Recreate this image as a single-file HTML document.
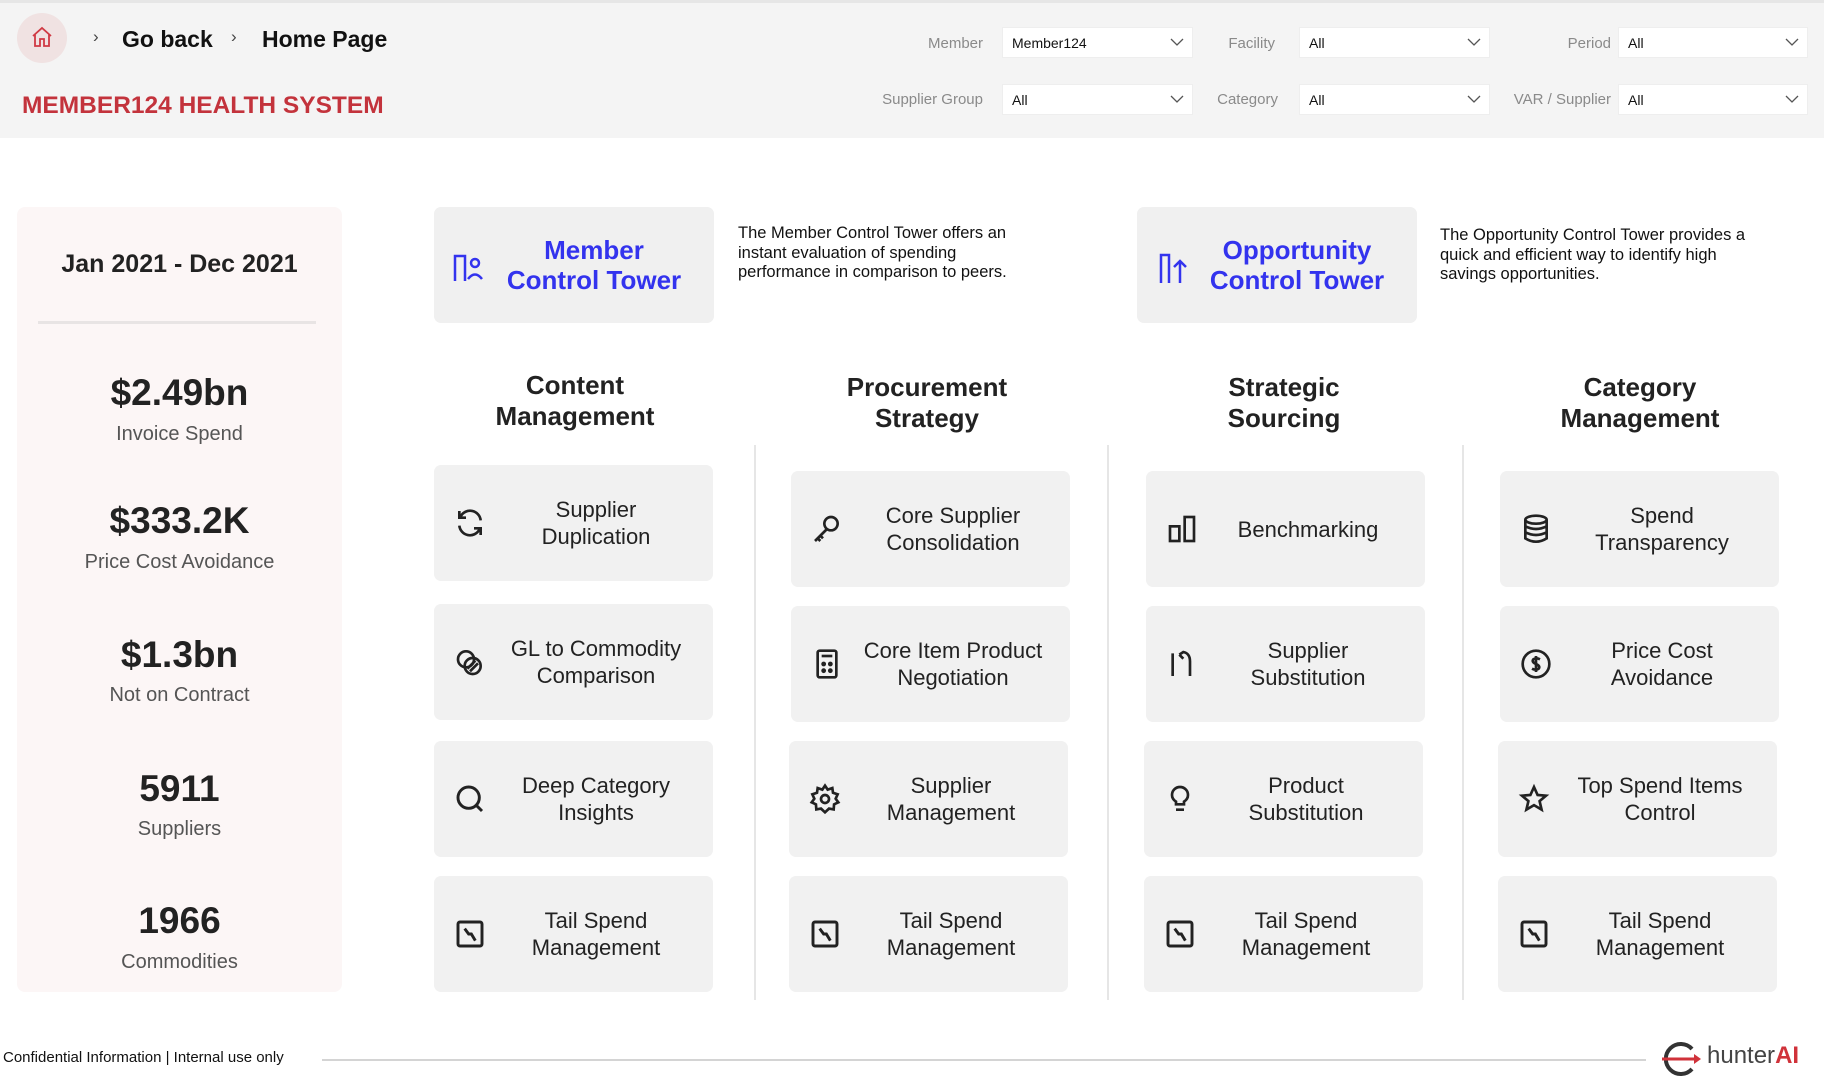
<!DOCTYPE html>
<html><head><meta charset="utf-8"><style>
*{margin:0;padding:0;box-sizing:border-box}
body{width:1824px;height:1082px;background:#fff;font-family:"Liberation Sans",Arial,sans-serif;position:relative;overflow:hidden;color:#222}
.a{position:absolute}
.hdr{left:0;top:0;width:1824px;height:138px;background:#f4f4f4;border-top:3px solid #e6e6e6}
.lbl{font-size:15px;color:#8a8a8a;text-align:right;width:160px}
.sel{background:#fff;border:1px solid #eee;height:31px;font-size:14px;color:#111;padding:7px 9px}
.sel svg{position:absolute;right:8px;top:9px}
.panel{left:17px;top:207px;width:325px;height:785px;background:#fcf6f6;border-radius:8px}
.kv{width:325px;left:17px;text-align:center}
.big{font-size:37px;font-weight:bold;color:#222}
.sm{font-size:20px;color:#555}
.card{background:#f1f1f1;border-radius:7px;width:279px;height:116px;display:flex;align-items:center;justify-content:center;padding-left:50px;padding-right:5px;text-align:center;font-size:22px;line-height:27px;color:#222}
.card svg{position:absolute;left:20px;top:42px}
.ch{font-size:26px;font-weight:bold;text-align:center;line-height:31px;width:300px;color:#222}
.vd{width:2px;background:#e6e6e6;top:445px;height:555px}
.tw{background:#f0f0f0;border-radius:7px;width:280px;height:116px;color:#3333ee;font-weight:bold;font-size:26px;line-height:30px;text-align:center;padding-left:40px;display:flex;align-items:center;justify-content:center}
.desc{font-size:16.5px;line-height:19.5px;color:#111;width:330px}
</style></head><body>
<div class="a hdr"></div>
<div class="a" style="left:17px;top:13px;width:50px;height:50px;border-radius:50%;background:#f0e2e2"></div>
<svg class="a" style="left:30px;top:25px" width="24" height="24" viewBox="0 0 24 24" fill="none" stroke="#d03a44" stroke-width="1.8"><path d="M3 11 L12 3 L21 11 M5 9 V21 H10 V14 H14 V21 H19 V9"/></svg>
<div class="a" style="left:93px;top:27px;font-size:17px;color:#444">›</div>
<div class="a" style="left:122px;top:26px;font-size:23px;font-weight:bold;color:#111">Go back</div>
<div class="a" style="left:231px;top:27px;font-size:17px;color:#444">›</div>
<div class="a" style="left:262px;top:26px;font-size:23px;font-weight:bold;color:#111">Home Page</div>
<div class="a" style="left:22px;top:92px;font-size:24.5px;font-weight:bold;color:#c3333c">MEMBER124 HEALTH SYSTEM</div>

<div class="a lbl" style="left:823px;top:35px">Member</div>
<div class="a sel" style="left:1002px;top:27px;width:191px">Member124<svg width="14" height="10" viewBox="0 0 14 10"><path d="M1 2 L7 8 L13 2" fill="none" stroke="#555" stroke-width="1.3"/></svg></div>
<div class="a lbl" style="left:1115px;top:35px">Facility</div>
<div class="a sel" style="left:1299px;top:27px;width:191px">All<svg width="14" height="10" viewBox="0 0 14 10"><path d="M1 2 L7 8 L13 2" fill="none" stroke="#555" stroke-width="1.3"/></svg></div>
<div class="a lbl" style="left:1451px;top:35px">Period</div>
<div class="a sel" style="left:1618px;top:27px;width:190px">All<svg width="14" height="10" viewBox="0 0 14 10"><path d="M1 2 L7 8 L13 2" fill="none" stroke="#555" stroke-width="1.3"/></svg></div>
<div class="a lbl" style="left:823px;top:91px">Supplier Group</div>
<div class="a sel" style="left:1002px;top:84px;width:191px">All<svg width="14" height="10" viewBox="0 0 14 10"><path d="M1 2 L7 8 L13 2" fill="none" stroke="#555" stroke-width="1.3"/></svg></div>
<div class="a lbl" style="left:1118px;top:91px">Category</div>
<div class="a sel" style="left:1299px;top:84px;width:191px">All<svg width="14" height="10" viewBox="0 0 14 10"><path d="M1 2 L7 8 L13 2" fill="none" stroke="#555" stroke-width="1.3"/></svg></div>
<div class="a lbl" style="left:1451px;top:91px">VAR / Supplier</div>
<div class="a sel" style="left:1618px;top:84px;width:190px">All<svg width="14" height="10" viewBox="0 0 14 10"><path d="M1 2 L7 8 L13 2" fill="none" stroke="#555" stroke-width="1.3"/></svg></div>

<div class="a panel"></div>
<div class="a kv" style="top:250px;font-size:25px;font-weight:bold;color:#222">Jan 2021 - Dec 2021</div>
<div class="a" style="left:38px;top:321px;width:278px;height:3px;background:#e8e4e4"></div>
<div class="a kv big" style="top:372px">$2.49bn</div><div class="a kv sm" style="top:423px">Invoice Spend</div>
<div class="a kv big" style="top:500px">$333.2K</div><div class="a kv sm" style="top:551px">Price Cost Avoidance</div>
<div class="a kv big" style="top:634px">$1.3bn</div><div class="a kv sm" style="top:684px">Not on Contract</div>
<div class="a kv big" style="top:768px">5911</div><div class="a kv sm" style="top:818px">Suppliers</div>
<div class="a kv big" style="top:900px">1966</div><div class="a kv sm" style="top:951px">Commodities</div>

<div class="a tw" style="left:434px;top:207px"><div>Member<br>Control Tower</div></div>
<svg class="a" style="left:453px;top:253px" width="34" height="30" viewBox="0 0 34 30" fill="none" stroke="#3333ee" stroke-width="2.5"><path d="M2 28 V3 H12 V28"/><circle cx="22" cy="10" r="4"/><path d="M15 26 Q22 17 29 26"/></svg>
<div class="a desc" style="left:738px;top:224px;width:300px">The Member Control Tower offers an instant evaluation of spending performance in comparison to peers.</div>
<div class="a tw" style="left:1137px;top:207px"><div>Opportunity<br>Control Tower</div></div>
<svg class="a" style="left:1158px;top:251px" width="34" height="34" viewBox="0 0 34 34" fill="none" stroke="#3333ee" stroke-width="2.5"><path d="M3 32 V4 H11 V32"/><path d="M22 32 V10 M16 16 L22 10 L28 16"/></svg>
<div class="a desc" style="left:1440px;top:226px">The Opportunity Control Tower provides a quick and efficient way to identify high savings opportunities.</div>

<div class="a ch" style="left:425px;top:370px">Content<br>Management</div>
<div class="a ch" style="left:777px;top:372px">Procurement<br>Strategy</div>
<div class="a ch" style="left:1134px;top:372px">Strategic<br>Sourcing</div>
<div class="a ch" style="left:1490px;top:372px">Category<br>Management</div>
<div class="a vd" style="left:754px"></div>
<div class="a vd" style="left:1107px"></div>
<div class="a vd" style="left:1462px"></div>

<div class="a card" style="left:434px;top:465px"><svg width="32" height="32" viewBox="0 0 24 24" fill="none" stroke="#222" stroke-width="2"><path d="M20 10 A8 8 0 0 0 5 7 M4 3 V8 H9 M4 14 A8 8 0 0 0 19 17 M20 21 V16 H15"/></svg>Supplier<br>Duplication</div>
<div class="a card" style="left:434px;top:604px"><svg width="32" height="32" viewBox="0 0 24 24" fill="none" stroke="#222" stroke-width="2"><circle cx="9" cy="10" r="6"/><circle cx="14" cy="15" r="6"/><path d="M10 17 L16 11 M12 19 L18 13"/></svg>GL to Commodity<br>Comparison</div>
<div class="a card" style="left:434px;top:741px"><svg width="32" height="32" viewBox="0 0 24 24" fill="none" stroke="#222" stroke-width="2.2"><circle cx="11" cy="11" r="8"/><path d="M17 17 L21 21"/></svg>Deep Category<br>Insights</div>
<div class="a card" style="left:434px;top:876px"><svg width="32" height="32" viewBox="0 0 24 24" fill="none" stroke="#222" stroke-width="2.2"><rect x="3" y="3" width="18" height="18" rx="1.5"/><path d="M8 8 L11 12 L13 12 L16 17"/></svg>Tail Spend<br>Management</div>
<div class="a card" style="left:791px;top:471px"><svg width="32" height="32" viewBox="0 0 24 24" fill="none" stroke="#222" stroke-width="2"><circle cx="15" cy="8" r="5"/><path d="M12 12 L3 21 M5 19 L7 21 M7 17 L9 19"/></svg>Core Supplier<br>Consolidation</div>
<div class="a card" style="left:791px;top:606px"><svg width="32" height="32" viewBox="0 0 24 24" fill="none" stroke="#222" stroke-width="2"><rect x="5" y="2" width="14" height="20" rx="1.5"/><path d="M8 6 H16"/><circle cx="9.5" cy="12" r=".8" fill="#222"/><circle cx="14.5" cy="12" r=".8" fill="#222"/><circle cx="9.5" cy="17" r=".8" fill="#222"/><circle cx="14.5" cy="17" r=".8" fill="#222"/></svg>Core Item Product<br>Negotiation</div>
<div class="a card" style="left:789px;top:741px"><svg width="32" height="32" viewBox="0 0 24 24" fill="none" stroke="#222" stroke-width="2"><circle cx="12" cy="12" r="3"/><path d="M12 2 L14 5 L17.5 3.8 L18 7.3 L21.5 8.5 L20 11.8 L22 14.5 L18.8 16 L18.5 19.8 L15 19.2 L12 22 L9 19.2 L5.5 19.8 L5.2 16 L2 14.5 L4 11.8 L2.5 8.5 L6 7.3 L6.5 3.8 L10 5 Z"/></svg>Supplier<br>Management</div>
<div class="a card" style="left:789px;top:876px"><svg width="32" height="32" viewBox="0 0 24 24" fill="none" stroke="#222" stroke-width="2.2"><rect x="3" y="3" width="18" height="18" rx="1.5"/><path d="M8 8 L11 12 L13 12 L16 17"/></svg>Tail Spend<br>Management</div>
<div class="a card" style="left:1146px;top:471px"><svg width="32" height="32" viewBox="0 0 24 24" fill="none" stroke="#222" stroke-width="2"><rect x="3" y="10" width="7" height="11"/><rect x="14" y="3" width="7" height="18"/></svg>Benchmarking</div>
<div class="a card" style="left:1146px;top:606px"><svg width="32" height="32" viewBox="0 0 24 24" fill="none" stroke="#222" stroke-width="2"><path d="M5 4 V21 M10 5 L13 3 Q18 4 18 10 V21 M10 5 L13 8"/></svg>Supplier<br>Substitution</div>
<div class="a card" style="left:1144px;top:741px"><svg width="32" height="32" viewBox="0 0 24 24" fill="none" stroke="#222" stroke-width="2"><path d="M9 16 V14 Q6 12 6 9 A6 6 0 0 1 18 9 Q18 12 15 14 V16 Z M9 20 H15"/></svg>Product<br>Substitution</div>
<div class="a card" style="left:1144px;top:876px"><svg width="32" height="32" viewBox="0 0 24 24" fill="none" stroke="#222" stroke-width="2.2"><rect x="3" y="3" width="18" height="18" rx="1.5"/><path d="M8 8 L11 12 L13 12 L16 17"/></svg>Tail Spend<br>Management</div>
<div class="a card" style="left:1500px;top:471px"><svg width="32" height="32" viewBox="0 0 24 24" fill="none" stroke="#222" stroke-width="2"><ellipse cx="12" cy="5" rx="8" ry="3"/><path d="M4 5 V19 Q12 24 20 19 V5 M4 10 Q12 14 20 10 M4 14.5 Q12 18.5 20 14.5"/></svg>Spend<br>Transparency</div>
<div class="a card" style="left:1500px;top:606px"><svg width="32" height="32" viewBox="0 0 24 24" fill="none" stroke="#222" stroke-width="2"><circle cx="12" cy="12" r="10"/><path d="M15 8.5 Q12 7 10 8.5 Q8.5 10.5 12 12 Q15.5 13.5 14 15.5 Q12 17 9 15.5 M12 6 V18"/></svg>Price Cost<br>Avoidance</div>
<div class="a card" style="left:1498px;top:741px"><svg width="32" height="32" viewBox="0 0 24 24" fill="none" stroke="#222" stroke-width="2"><path d="M12 3 L14.7 9 L21 9.5 L16.2 13.6 L17.7 20 L12 16.6 L6.3 20 L7.8 13.6 L3 9.5 L9.3 9 Z"/></svg>Top Spend Items<br>Control</div>
<div class="a card" style="left:1498px;top:876px"><svg width="32" height="32" viewBox="0 0 24 24" fill="none" stroke="#222" stroke-width="2.2"><rect x="3" y="3" width="18" height="18" rx="1.5"/><path d="M8 8 L11 12 L13 12 L16 17"/></svg>Tail Spend<br>Management</div>

<div class="a" style="left:3px;top:1049px;font-size:15px;color:#111">Confidential Information | Internal use only</div>
<div class="a" style="left:322px;top:1059px;width:1324px;height:2px;background:#d4d4d4"></div>
<svg class="a" style="left:1658px;top:1039px" width="46" height="40" viewBox="0 0 46 40" fill="none"><path d="M34 10 A15 15 0 1 0 34 30" stroke="#333" stroke-width="4"/><path d="M4 20 H38" stroke="#d0323a" stroke-width="3"/><path d="M36 15 L43 20 L36 25 Z" fill="#d0323a"/></svg>
<div class="a" style="left:1707px;top:1042px;font-size:24px;color:#444">hunter<span style="color:#d0323a;font-weight:bold">AI</span></div>
</body></html>
